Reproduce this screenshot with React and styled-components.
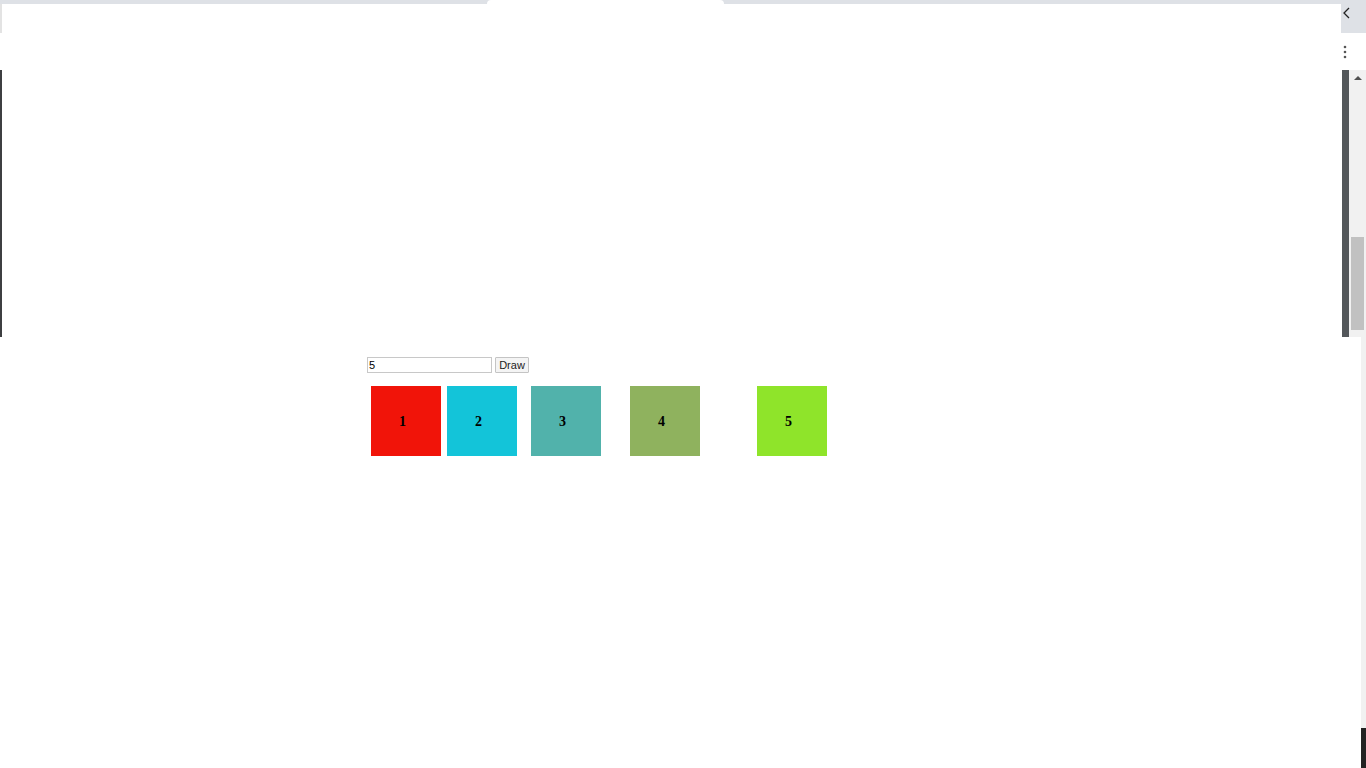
import React, { useState } from "react";
import styled, { createGlobalStyle } from "styled-components";

const GlobalStyle = createGlobalStyle`
  html, body {
    margin: 0;
    padding: 0;
    background: #fff;
    overflow: hidden;
  }
  body {
    font-family: "Liberation Serif", "Times New Roman", serif;
  }
`;

const Page = styled.div`
  display: flex;
  flex-direction: column;
  width: 1366px;
  height: 768px;
`;

/* top strip, looks like a browser frame bleeding into the shot */
const Header = styled.div`
  display: flex;
  height: 70px;
`;

const HeaderMain = styled.div`
  flex: 1;
  display: flex;
  flex-direction: column;
`;

const TabStrip = styled.div`
  height: 4px;
  background: #dee1e6;
  display: flex;
`;

const Tab = styled.div`
  margin-left: 487px;
  width: 237px;
  background: #fff;
  border-radius: 8px 8px 0 0;
`;

const HeaderBody = styled.div`
  height: 29px;
  border-left: 2px solid #e3e3e3;
  background: #fff;
`;

const HeaderSide = styled.div`
  width: 25px;
  display: flex;
  flex-direction: column;
`;

const SideTop = styled.div`
  height: 33px;
  background: #dee1e6;
  display: flex;
  align-items: flex-start;
  padding: 7px 0 0 1px;
  box-sizing: border-box;
`;

const SideMenu = styled.div`
  flex: 1;
  background: #fff;
  display: flex;
  align-items: center;
  padding-left: 2px;
`;

const Viewport = styled.div`
  display: flex;
  height: 267px;
`;

const ViewMain = styled.div`
  flex: 1;
  background: #fff;
  border-left: 2px solid #3d3f41;
`;

const Rail = styled.div`
  width: 7px;
  background: #53575a;
`;

const Track = styled.div`
  width: 17px;
  background: #f1f1f1;
  display: flex;
  flex-direction: column;
  align-items: center;
`;

const Arrow = styled.div`
  margin-top: 6px;
  width: 0;
  height: 0;
  border-left: 4px solid transparent;
  border-right: 4px solid transparent;
  border-bottom: 4px solid #505050;
`;

const Thumb = styled.div`
  margin-top: auto;
  margin-bottom: 7px;
  width: 13px;
  height: 93px;
  background: #c1c1c1;
`;

const Content = styled.div`
  flex: 1;
  display: flex;
`;

const ContentMain = styled.div`
  flex: 1;
  padding: 20px 0 0 367px;
`;

const EdgeTrack = styled.div`
  width: 5px;
  display: flex;
  flex-direction: column;
  background: #f1f1f1;
`;

const EdgeDark = styled.div`
  margin-top: auto;
  height: 40px;
  background: #222;
`;

const Controls = styled.div`
  display: flex;
  gap: 3px;
`;

const Input = styled.input`
  box-sizing: border-box;
  width: 125px;
  height: 16px;
  padding: 0 1px;
  border: 1px solid #c8c8c8;
  font-family: "Liberation Sans", Arial, sans-serif;
  font-size: 11px;
  color: #000;
  outline: none;
`;

const Button = styled.button`
  box-sizing: border-box;
  width: 34px;
  height: 16px;
  padding: 0;
  border: 1px solid #c4c4c4;
  border-radius: 1px;
  background: #f4f4f4;
  font-family: "Liberation Sans", Arial, sans-serif;
  font-size: 11px;
  color: #222;
`;

const Row = styled.div`
  display: flex;
  margin-top: 13px;
`;

const Square = styled.div`
  width: 70px;
  height: 70px;
  margin-left: ${(p) => p.$offset}px;
  background: ${(p) => p.$color};
  display: flex;
  align-items: center;
  padding: 2px 0 0 28px;
  box-sizing: border-box;
  font-family: "Liberation Serif", "Times New Roman", serif;
  font-weight: bold;
  font-size: 14px;
  color: #000;
`;

const colors = ["#f11409", "#13c4d9", "#51b2ab", "#8fb25e", "#8fe42a"];
const offsets = [4, 6, 14, 29, 57];

const Chevron = () => (
  <svg width="9" height="12" viewBox="0 0 9 12">
    <path d="M7 1 L2 6 L7 11" fill="none" stroke="#222" strokeWidth="1.3" />
  </svg>
);

const Kebab = () => (
  <svg width="4" height="14" viewBox="0 0 4 14">
    <circle cx="2" cy="2" r="1.3" fill="#555" />
    <circle cx="2" cy="7" r="1.3" fill="#555" />
    <circle cx="2" cy="12" r="1.3" fill="#555" />
  </svg>
);

export default function App() {
  const [count, setCount] = useState("5");
  const [drawn, setDrawn] = useState(5);

  const n = Math.max(0, Math.min(colors.length, drawn));

  return (
    <>
      <GlobalStyle />
      <Page>
        <Header>
          <HeaderMain>
            <TabStrip>
              <Tab />
            </TabStrip>
            <HeaderBody />
          </HeaderMain>
          <HeaderSide>
            <SideTop>
              <Chevron />
            </SideTop>
            <SideMenu>
              <Kebab />
            </SideMenu>
          </HeaderSide>
        </Header>

        <Viewport>
          <ViewMain />
          <Rail />
          <Track>
            <Arrow />
            <Thumb />
          </Track>
        </Viewport>

        <Content>
          <ContentMain>
            <Controls>
              <Input value={count} onChange={(e) => setCount(e.target.value)} />
              <Button onClick={() => setDrawn(parseInt(count, 10) || 0)}>Draw</Button>
            </Controls>
            <Row>
              {colors.slice(0, n).map((c, i) => (
                <Square key={c} $color={c} $offset={offsets[i]}>
                  {i + 1}
                </Square>
              ))}
            </Row>
          </ContentMain>
          <EdgeTrack>
            <EdgeDark />
          </EdgeTrack>
        </Content>
      </Page>
    </>
  );
}
